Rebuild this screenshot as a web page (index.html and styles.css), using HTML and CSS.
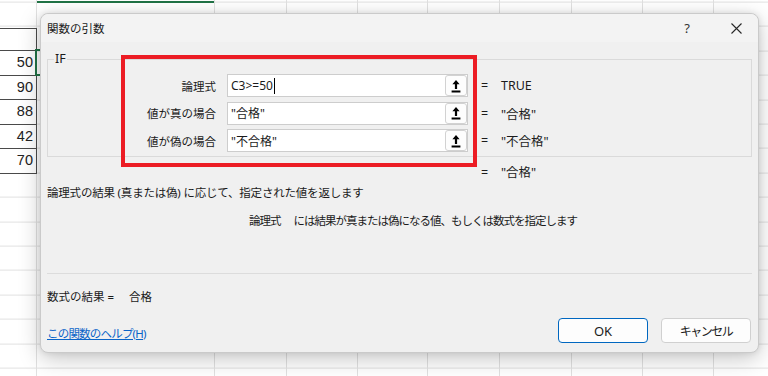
FILE: index.html
```html
<!DOCTYPE html>
<html lang="ja">
<head>
    <meta charset="UTF-8">
    <meta name="viewport" content="width=device-width, initial-scale=1.0">
    <title>関数の引数</title>
    <link rel="stylesheet" href="styles.css">
</head>
<body>
    <div class="sheet">
        <div class="col col-a">
            <div class="cell head"></div>
            <div class="cell">50</div>
            <div class="cell">90</div>
            <div class="cell">88</div>
            <div class="cell">42</div>
            <div class="cell">70</div>
        </div>
        <div class="col col-b">
            <div class="colhead"></div>
            <div class="sel"></div>
        </div>
        <div class="col w72"></div>
        <div class="col w71"></div>
        <div class="col w70"></div>
        <div class="col w72"></div>
        <div class="col w72"></div>
        <div class="col w71"></div>
        <div class="col w71"></div>
        <div class="col rest"></div>
    </div>

    <div class="dialog">
        <div class="titlebar">
            <span class="title">関数の引数</span>
            <span class="cap help">?</span>
            <span class="cap close">
                <svg width="11" height="11" viewBox="0 0 11 11"><path d="M0.5 0.5 L10.5 10.5 M10.5 0.5 L0.5 10.5" stroke="#262626" stroke-width="1.1" fill="none"/></svg>
            </span>
        </div>
        <div class="content">
            <fieldset class="group">
                <legend>IF</legend>
                <div class="args">
                    <label>論理式</label>
                    <div class="field"><span class="val">C3&gt;=50</span><span class="caret"></span><span class="pick"><svg width="10" height="14" viewBox="0 0 10 14"><path d="M5 1 L8.6 5.2 H6.1 V10 H3.9 V5.2 H1.4 Z M0.6 11.4 H9.4 V13.4 H0.6 Z"/></svg></span></div>
                    <span class="eq">=</span>
                    <span class="res">TRUE</span>

                    <label>値が真の場合</label>
                    <div class="field"><span class="val">"合格"</span><span class="pick"><svg width="10" height="14" viewBox="0 0 10 14"><path d="M5 1 L8.6 5.2 H6.1 V10 H3.9 V5.2 H1.4 Z M0.6 11.4 H9.4 V13.4 H0.6 Z"/></svg></span></div>
                    <span class="eq">=</span>
                    <span class="res">"合格"</span>

                    <label>値が偽の場合</label>
                    <div class="field"><span class="val">"不合格"</span><span class="pick"><svg width="10" height="14" viewBox="0 0 10 14"><path d="M5 1 L8.6 5.2 H6.1 V10 H3.9 V5.2 H1.4 Z M0.6 11.4 H9.4 V13.4 H0.6 Z"/></svg></span></div>
                    <span class="eq">=</span>
                    <span class="res">"不合格"</span>
                </div>
            </fieldset>

            <div class="total"><span class="eq">=</span><span class="res">"合格"</span></div>
            <p class="desc">論理式の結果 (真または偽) に応じて、指定された値を返します</p>
            <p class="argdesc"><span class="argname">論理式</span>には結果が真または偽になる値、もしくは数式を指定します</p>
            <hr class="sep">
            <p class="result">数式の結果 =<span class="resval">合格</span></p>

            <div class="footer">
                <a class="help-link" href="#">この関数のヘルプ(H)</a>
                <div class="btns">
                    <button class="btn ok">OK</button>
                    <button class="btn cancel">キャンセル</button>
                </div>
            </div>
        </div>
        <div class="mark"></div>
    </div>
</body>
</html>
```

FILE: styles.css
```css
* {
  box-sizing: border-box;
}
html, body {
  margin: 0;
}
body {
  width: 768px;
  height: 376px;
  overflow: hidden;
  position: relative;
  background: #fff;
  font-family: "Noto Sans", "Noto Sans CJK JP", sans-serif;
  color: #1b1b1b;
}

/* spreadsheet behind the dialog */
.sheet {
  display: flex;
  height: 376px;
  background-image: repeating-linear-gradient(to bottom, #e1e1e1 0 1px, transparent 1px 24.4px);
  background-position: 0 1.6px;
}
.col {
  flex: none;
  border-right: 1px solid #e1e1e1;
}
.col-a {
  width: 37px;
  padding-top: 28px;
}
.col-b {
  width: 178px;
  padding-top: 1px;
}
.w70 { width: 70px; }
.w71 { width: 71px; }
.w72 { width: 72px; }
.rest {
  flex: 1;
  border-right: 0;
}
.cell {
  height: 24.6px;
  margin-right: -1px;
  padding-right: 3px;
  background: #fff;
  border-bottom: 1px solid #4a4a4a;
  border-right: 1px solid #4a4a4a;
  text-align: right;
  font: 14.5px/23px "Liberation Sans", sans-serif;
  color: #222;
}
.cell.head {
  height: 23px;
  border-top: 1px solid #4a4a4a;
}
.colhead {
  height: 2px;
  background: #217346;
}
.sel {
  height: 27px;
  margin: 46px 0 0 -2px;
  border: 2px solid #217346;
}

/* dialog */
.dialog {
  position: absolute;
  left: 40px;
  top: 13px;
  width: 719px;
  height: 340px;
  background: #f0f0f0;
  border: 1px solid #cacaca;
  border-radius: 8px;
  box-shadow: 0 6px 22px rgba(0,0,0,.22), 0 0 6px rgba(0,0,0,.10);
}
.titlebar {
  display: flex;
  align-items: center;
  height: 28px;
  padding-left: 6px;
  background: #f3f3f3;
  border-radius: 8px 8px 0 0;
}
.title {
  flex: 1;
  font-size: 11.5px;
}
.cap {
  display: flex;
  align-items: center;
  justify-content: center;
  width: 44px;
  height: 28px;
}
.help {
  margin-right: 5px;
  font-size: 13px;
  color: #333;
}
.content {
  padding: 0 6px;
}
.group {
  margin: 9px 0 0;
  padding: 7px 6px 4px;
  border: 1px solid #dadada;
  min-width: 0;
}
.group legend {
  padding: 0 1px;
  font-size: 12.5px;
  line-height: 16px;
}
.args {
  display: grid;
  grid-template-columns: 173px 254px 20px 1fr;
  row-gap: 4.5px;
  align-items: center;
}
.args label {
  padding-right: 11px;
  text-align: right;
  font-size: 11.5px;
}
.field {
  display: flex;
  align-items: center;
  width: 241px;
  height: 23px;
  padding-left: 3px;
  background: #fff;
  border: 1px solid #cdcdcd;
  font-size: 12px;
}
.val {
  white-space: pre;
}
.caret {
  width: 1px;
  height: 16px;
  margin-left: 1px;
  background: #000;
}
.pick {
  display: flex;
  align-items: center;
  justify-content: center;
  width: 22px;
  height: 21px;
  margin-left: auto;
  background: #fdfdfd;
  border: 1px solid #d2d2d2;
  border-radius: 3px;
}
.eq {
  width: 20px;
  font-size: 12.5px;
}
.res {
  font-size: 12.5px;
}
.total {
  display: flex;
  margin-top: 8px;
  padding-left: 434px;
  line-height: 16px;
}
.desc, .argdesc, .result {
  margin: 0;
  font-size: 11.5px;
  line-height: 16px;
}
.desc {
  margin-top: 4px;
  letter-spacing: -0.2px;
}
.argdesc {
  margin-top: 12px;
  padding-left: 202px;
  letter-spacing: -1px;
}
.argname {
  margin-right: 13px;
}
.sep {
  height: 0;
  margin: 44px 0 0;
  border: 0;
  border-top: 1px solid #dcdcdc;
}
.result {
  margin-top: 15px;
}
.resval {
  margin-left: 15px;
}
.footer {
  display: flex;
  align-items: center;
  justify-content: space-between;
  margin-top: 13px;
}
.help-link {
  margin-top: 4px;
  font-size: 11.5px;
  letter-spacing: -0.8px;
  color: #0a64c8;
}
.btns {
  display: flex;
  gap: 13px;
  margin-right: 1px;
}
.btn {
  width: 90px;
  height: 25px;
  padding: 0;
  background: #fdfdfd;
  border: 1px solid #d0d0d0;
  border-radius: 4px;
  font-family: "Noto Sans", "Noto Sans CJK JP", sans-serif;
  font-size: 12px;
  color: #1b1b1b;
}
.btn.ok {
  border-color: #0067c0;
  font-size: 13px;
}
.btn.cancel {
  letter-spacing: -1.5px;
}

/* red annotation box */
.mark {
  position: absolute;
  left: 80px;
  top: 41px;
  width: 356px;
  height: 112px;
  border: 4px solid #ec1c24;
}
```
